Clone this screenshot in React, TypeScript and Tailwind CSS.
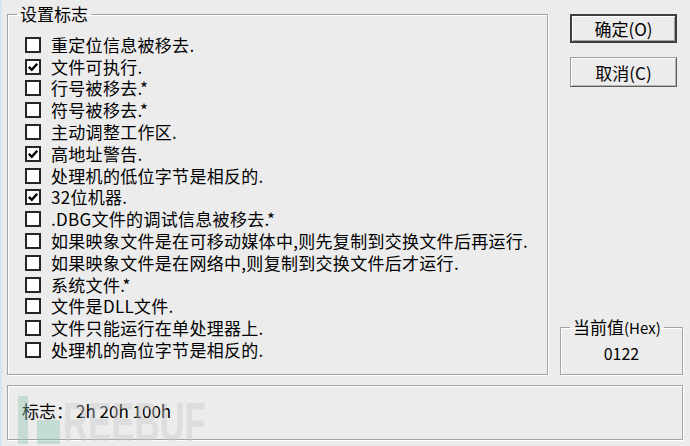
import React from "react";

type Flag = { label: string; checked: boolean };

const flags: Flag[] = [
  { label: "重定位信息被移去.", checked: false },
  { label: "文件可执行.", checked: true },
  { label: "行号被移去.*", checked: false },
  { label: "符号被移去.*", checked: false },
  { label: "主动调整工作区.", checked: false },
  { label: "高地址警告.", checked: true },
  { label: "处理机的低位字节是相反的.", checked: false },
  { label: "32位机器.", checked: true },
  { label: ".DBG文件的调试信息被移去.*", checked: false },
  { label: "如果映象文件是在可移动媒体中,则先复制到交换文件后再运行.", checked: false },
  { label: "如果映象文件是在网络中,则复制到交换文件后才运行.", checked: false },
  { label: "系统文件.*", checked: false },
  { label: "文件是DLL文件.", checked: false },
  { label: "文件只能运行在单处理器上.", checked: false },
  { label: "处理机的高位字节是相反的.", checked: false },
];

const CheckBox = ({ checked }: { checked: boolean }) => (
  <span className="w-[16px] h-[16px] shrink-0 border-2 border-[#262626] bg-white flex items-center justify-center">
    {checked && (
      <svg width="12" height="12" viewBox="0 0 12 12">
        <path d="M1.8 5.8 L4.8 8.8 L10.2 2.8" fill="none" stroke="#000" strokeWidth="2.4" />
      </svg>
    )}
  </span>
);

const FlagRow = ({ flag }: { flag: Flag }) => (
  <div className="h-[21.8px] flex items-center gap-[10px] pl-[17px]">
    <CheckBox checked={flag.checked} />
    <span className="block text-[17px] leading-[20px] tracking-[0.3px] whitespace-nowrap">{flag.label}</span>
  </div>
);

export default function App() {
  return (
    <div className="relative w-[690px] h-[446px] overflow-hidden bg-[#ececec] border-l-2 border-[#d6e6f1] pl-[5px] pt-[3px] text-black font-['Noto_Sans_CJK_SC',sans-serif]">
      <div className="flex items-start">
        <fieldset className="w-[541px] h-[372px] border border-[#a3a3a3] shadow-[inset_1px_1px_0_#fff,1px_1px_0_#fff]">
          <legend className="ml-[9px] px-[3px] text-[17px] leading-[22px]">设置标志</legend>
          <div className="pt-[9px] flex flex-col">
            {flags.map((f) => (
              <FlagRow key={f.label} flag={f} />
            ))}
          </div>
        </fieldset>

        <div className="ml-[12px] w-[123px] h-[372px] flex flex-col">
          <button className="mt-[11px] ml-[10px] w-[107px] h-[29px] border-2 border-[#3e3e3e] bg-[#ececec] shadow-[inset_1px_1px_0_#fff,inset_-1px_-1px_0_#a0a0a0] text-[17px] leading-none flex items-center justify-center">
            确定(O)
          </button>
          <button className="mt-[14px] ml-[10px] w-[107px] h-[30px] border border-[#9a9a9a] border-r-[#5c5c5c] border-b-[#5c5c5c] bg-[#ececec] shadow-[inset_1px_1px_0_#fff,inset_-1px_-1px_0_#b4b4b4] text-[17px] leading-none flex items-center justify-center">
            取消(C)
          </button>

          <fieldset className="mt-auto w-[123px] h-[59px] border border-[#a3a3a3] shadow-[inset_1px_1px_0_#fff,1px_1px_0_#fff]">
            <legend className="ml-[9px] px-[3px] text-[17px] leading-[22px] whitespace-nowrap">
              当前值<span className="text-[15px]">(Hex)</span>
            </legend>
            <div className="text-center text-[16px] leading-[28px]">0122</div>
          </fieldset>
        </div>
      </div>

      <div className="mt-[10px] w-[676px] h-[55px] border border-[#a3a3a3] shadow-[inset_1px_1px_0_#fff,1px_1px_0_#fff] flex items-center pl-[14px] pb-[4px]">
        <span className="block text-[17px] leading-[20px] whitespace-nowrap">标志：<span className="ml-[3px]">2h 20h 100h</span></span>
      </div>

      {/* faint site mark in the lower left corner */}
      <div className="pointer-events-none absolute left-[16px] top-[396px] h-[48px] flex items-end opacity-40">
        <div className="w-[10px] h-[48px] bg-[#8cc5b0]" />
        <div className="ml-[9px] w-[23px] h-[24px] bg-[#8cc5b0]" />
        <span className="block ml-[3px] origin-left scale-x-[0.62] font-['Liberation_Sans',sans-serif] font-bold text-[56px] leading-[44px] text-[#c8c8c8]">
          REEBUF
        </span>
      </div>
    </div>
  );
}
